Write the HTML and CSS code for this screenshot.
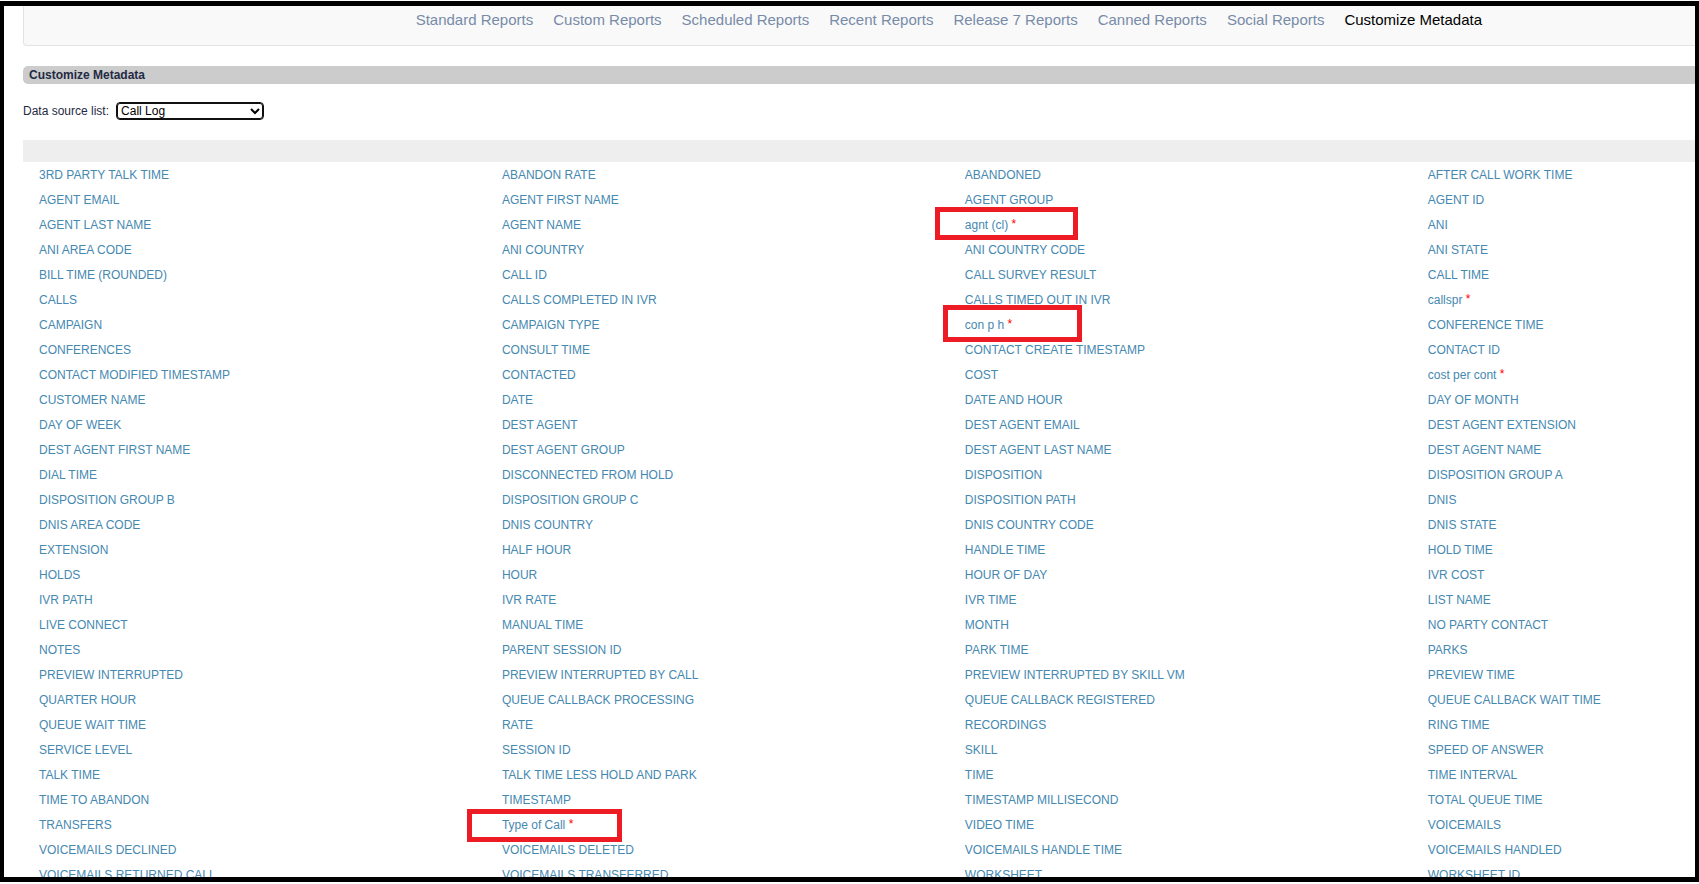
FILE: index.html
```html
<!DOCTYPE html>
<html lang="en">
<head>
    <meta charset="UTF-8">
    <meta name="viewport" content="width=device-width, initial-scale=1.0">
    <title>Customize Metadata</title>
    <link rel="stylesheet" href="styles.css">
</head>
<body>
    <div class="frame">
        <div class="page">
            <nav class="menu">
                <a href="#">Standard Reports</a>
                <a href="#">Custom Reports</a>
                <a href="#">Scheduled Reports</a>
                <a href="#">Recent Reports</a>
                <a href="#">Release 7 Reports</a>
                <a href="#">Canned Reports</a>
                <a href="#">Social Reports</a>
                <a href="#" class="active">Customize Metadata</a>
            </nav>
            <h1 class="page-title">Customize Metadata</h1>
            <div class="source">
                <label for="source-list">Data source list:</label>
                <select id="source-list">
                    <option selected>Call Log</option>
                </select>
            </div>
            <div class="list-header"></div>
            <ul class="fields">
                <li><a href="#">3RD PARTY TALK TIME</a></li>
                <li><a href="#">ABANDON RATE</a></li>
                <li><a href="#">ABANDONED</a></li>
                <li><a href="#">AFTER CALL WORK TIME</a></li>
                <li><a href="#">AGENT EMAIL</a></li>
                <li><a href="#">AGENT FIRST NAME</a></li>
                <li><a href="#">AGENT GROUP</a></li>
                <li><a href="#">AGENT ID</a></li>
                <li><a href="#">AGENT LAST NAME</a></li>
                <li><a href="#">AGENT NAME</a></li>
                <li><a href="#">agnt (cl)</a> <span class="custom">*</span><span class="mark mark-agent"></span></li>
                <li><a href="#">ANI</a></li>
                <li><a href="#">ANI AREA CODE</a></li>
                <li><a href="#">ANI COUNTRY</a></li>
                <li><a href="#">ANI COUNTRY CODE</a></li>
                <li><a href="#">ANI STATE</a></li>
                <li><a href="#">BILL TIME (ROUNDED)</a></li>
                <li><a href="#">CALL ID</a></li>
                <li><a href="#">CALL SURVEY RESULT</a></li>
                <li><a href="#">CALL TIME</a></li>
                <li><a href="#">CALLS</a></li>
                <li><a href="#">CALLS COMPLETED IN IVR</a></li>
                <li><a href="#">CALLS TIMED OUT IN IVR</a></li>
                <li><a href="#">callspr</a> <span class="custom">*</span></li>
                <li><a href="#">CAMPAIGN</a></li>
                <li><a href="#">CAMPAIGN TYPE</a></li>
                <li><a href="#">con p h</a> <span class="custom">*</span><span class="mark mark-con"></span></li>
                <li><a href="#">CONFERENCE TIME</a></li>
                <li><a href="#">CONFERENCES</a></li>
                <li><a href="#">CONSULT TIME</a></li>
                <li><a href="#">CONTACT CREATE TIMESTAMP</a></li>
                <li><a href="#">CONTACT ID</a></li>
                <li><a href="#">CONTACT MODIFIED TIMESTAMP</a></li>
                <li><a href="#">CONTACTED</a></li>
                <li><a href="#">COST</a></li>
                <li><a href="#">cost per cont</a> <span class="custom">*</span></li>
                <li><a href="#">CUSTOMER NAME</a></li>
                <li><a href="#">DATE</a></li>
                <li><a href="#">DATE AND HOUR</a></li>
                <li><a href="#">DAY OF MONTH</a></li>
                <li><a href="#">DAY OF WEEK</a></li>
                <li><a href="#">DEST AGENT</a></li>
                <li><a href="#">DEST AGENT EMAIL</a></li>
                <li><a href="#">DEST AGENT EXTENSION</a></li>
                <li><a href="#">DEST AGENT FIRST NAME</a></li>
                <li><a href="#">DEST AGENT GROUP</a></li>
                <li><a href="#">DEST AGENT LAST NAME</a></li>
                <li><a href="#">DEST AGENT NAME</a></li>
                <li><a href="#">DIAL TIME</a></li>
                <li><a href="#">DISCONNECTED FROM HOLD</a></li>
                <li><a href="#">DISPOSITION</a></li>
                <li><a href="#">DISPOSITION GROUP A</a></li>
                <li><a href="#">DISPOSITION GROUP B</a></li>
                <li><a href="#">DISPOSITION GROUP C</a></li>
                <li><a href="#">DISPOSITION PATH</a></li>
                <li><a href="#">DNIS</a></li>
                <li><a href="#">DNIS AREA CODE</a></li>
                <li><a href="#">DNIS COUNTRY</a></li>
                <li><a href="#">DNIS COUNTRY CODE</a></li>
                <li><a href="#">DNIS STATE</a></li>
                <li><a href="#">EXTENSION</a></li>
                <li><a href="#">HALF HOUR</a></li>
                <li><a href="#">HANDLE TIME</a></li>
                <li><a href="#">HOLD TIME</a></li>
                <li><a href="#">HOLDS</a></li>
                <li><a href="#">HOUR</a></li>
                <li><a href="#">HOUR OF DAY</a></li>
                <li><a href="#">IVR COST</a></li>
                <li><a href="#">IVR PATH</a></li>
                <li><a href="#">IVR RATE</a></li>
                <li><a href="#">IVR TIME</a></li>
                <li><a href="#">LIST NAME</a></li>
                <li><a href="#">LIVE CONNECT</a></li>
                <li><a href="#">MANUAL TIME</a></li>
                <li><a href="#">MONTH</a></li>
                <li><a href="#">NO PARTY CONTACT</a></li>
                <li><a href="#">NOTES</a></li>
                <li><a href="#">PARENT SESSION ID</a></li>
                <li><a href="#">PARK TIME</a></li>
                <li><a href="#">PARKS</a></li>
                <li><a href="#">PREVIEW INTERRUPTED</a></li>
                <li><a href="#">PREVIEW INTERRUPTED BY CALL</a></li>
                <li><a href="#">PREVIEW INTERRUPTED BY SKILL VM</a></li>
                <li><a href="#">PREVIEW TIME</a></li>
                <li><a href="#">QUARTER HOUR</a></li>
                <li><a href="#">QUEUE CALLBACK PROCESSING</a></li>
                <li><a href="#">QUEUE CALLBACK REGISTERED</a></li>
                <li><a href="#">QUEUE CALLBACK WAIT TIME</a></li>
                <li><a href="#">QUEUE WAIT TIME</a></li>
                <li><a href="#">RATE</a></li>
                <li><a href="#">RECORDINGS</a></li>
                <li><a href="#">RING TIME</a></li>
                <li><a href="#">SERVICE LEVEL</a></li>
                <li><a href="#">SESSION ID</a></li>
                <li><a href="#">SKILL</a></li>
                <li><a href="#">SPEED OF ANSWER</a></li>
                <li><a href="#">TALK TIME</a></li>
                <li><a href="#">TALK TIME LESS HOLD AND PARK</a></li>
                <li><a href="#">TIME</a></li>
                <li><a href="#">TIME INTERVAL</a></li>
                <li><a href="#">TIME TO ABANDON</a></li>
                <li><a href="#">TIMESTAMP</a></li>
                <li><a href="#">TIMESTAMP MILLISECOND</a></li>
                <li><a href="#">TOTAL QUEUE TIME</a></li>
                <li><a href="#">TRANSFERS</a></li>
                <li><a href="#">Type of Call</a> <span class="custom">*</span><span class="mark mark-type"></span></li>
                <li><a href="#">VIDEO TIME</a></li>
                <li><a href="#">VOICEMAILS</a></li>
                <li><a href="#">VOICEMAILS DECLINED</a></li>
                <li><a href="#">VOICEMAILS DELETED</a></li>
                <li><a href="#">VOICEMAILS HANDLE TIME</a></li>
                <li><a href="#">VOICEMAILS HANDLED</a></li>
                <li><a href="#">VOICEMAILS RETURNED CALL</a></li>
                <li><a href="#">VOICEMAILS TRANSFERRED</a></li>
                <li><a href="#">WORKSHEET</a></li>
                <li><a href="#">WORKSHEET ID</a></li>
            </ul>
        </div>
    </div>
</body>
</html>
```
FILE: styles.css
```css
* {
    box-sizing: border-box;
}
body {
    margin: 0;
    padding-top: 1px;
    height: 100vh;
    overflow: hidden;
    background: #fff;
    color: #1f2a44;
    font-family: "Liberation Sans", Arial, sans-serif;
    font-size: 12px;
}
.frame {
    height: calc(100vh - 3px);
    border: 5px solid #000;
    border-width: 5px 4px;
    overflow: hidden;
}
/* wider than the frame, the right side runs out of view */
.page {
    width: 109.5%;
    margin-left: 19px;
}
.menu {
    display: flex;
    justify-content: center;
    gap: 20px;
    height: 40px;
    padding-top: 5px;
    background: #f9f9f9;
    border: 1px solid #e3e3e3;
    border-top: none;
    border-radius: 0 0 4px 4px;
    font-size: 15px;
    line-height: 18px;
}
.menu a {
    color: #778ba8;
    text-decoration: none;
    white-space: nowrap;
}
.menu a.active {
    color: #000;
}
.page-title {
    margin: 20px 0 0;
    padding-left: 6px;
    background: #ccc;
    border-radius: 5px;
    font-size: 12px;
    line-height: 18px;
}
.source {
    display: flex;
    align-items: center;
    gap: 7px;
    margin: 18px 0 20px;
}
.source select {
    width: 148px;
    height: 18px;
    padding: 0 1px 1px 0;
    background: #fff;
    border: 1px solid #101010;
    border-radius: 4px;
    box-shadow: inset 0 0 0 1px #101010;
    color: #000;
    font-family: inherit;
    font-size: 12px;
}
.list-header {
    height: 22px;
    background: #eee;
}
.fields {
    display: grid;
    grid-template-columns: repeat(4, 1fr);
    margin: 0;
    padding: 0;
    list-style: none;
}
.fields li {
    position: relative;
    padding: 2px 0 0 16px;
    line-height: 23px;
    white-space: nowrap;
}
.fields a {
    color: #4588b0;
    text-decoration: none;
}
.custom {
    color: #f00;
    line-height: 1;
    vertical-align: 1px;
}
.mark {
    position: absolute;
    z-index: 1;
    height: 33px;
    border: 5px solid #ed1c24;
    pointer-events: none;
}
.mark-agent {
    top: -5px;
    left: -14px;
    width: 143px;
}
.mark-con {
    top: -7px;
    left: -6px;
    width: 139px;
    height: 37px;
}
.mark-type {
    top: -3px;
    left: -19px;
    width: 155px;
}
```
